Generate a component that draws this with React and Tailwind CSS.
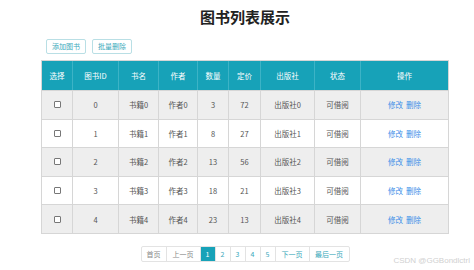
import React from "react";

const BOOKS = [0, 1, 2, 3, 4].map((i) => ({
  id: i,
  name: "书籍" + i,
  author: "作者" + i,
  count: [3, 8, 13, 18, 23][i],
  price: [72, 27, 56, 21, 13][i],
  press: "出版社" + i,
  status: "可借阅",
}));

const COLS = ["w-[31px]", "w-[46px]", "w-[40px]", "w-[39px]", "w-[31px]", "w-[32px]", "w-[54px]", "w-[46px]", "flex-1"];
const HEADS = ["选择", "图书ID", "书名", "作者", "数量", "定价", "出版社", "状态", "操作"];

const PAGES = [
  { label: "首页", w: "w-[25px]", muted: true },
  { label: "上一页", w: "w-[34px]", muted: true },
  { label: "1", w: "w-[15px]", active: true },
  { label: "2", w: "w-[15px]" },
  { label: "3", w: "w-[15px]" },
  { label: "4", w: "w-[15px]" },
  { label: "5", w: "w-[15px]" },
  { label: "下一页", w: "w-[34px]" },
  { label: "最后一页", w: "w-[39px]" },
];

const App = () => {
  return (
    <div className="w-[474px] h-[270px] bg-white relative overflow-hidden" style={{ fontFamily: '"Noto Sans CJK SC", "Open Sans", sans-serif' }}>
      <div className="ml-[41px] w-[408px]">
        {/* title */}
        <h1 className="pt-[6px] h-[39px] text-center text-[15px] font-bold text-[#222] leading-[22px]">图书列表展示</h1>

        {/* toolbar */}
        <div className="flex gap-[6px] pl-[5px] h-[21px] items-start">
          <button className="w-[40px] h-[15px] border border-[#b9dfe5] rounded-[2px] text-[7px] text-[#3aa9bb] leading-none">添加图书</button>
          <button className="w-[40px] h-[15px] border border-[#b9dfe5] rounded-[2px] text-[7px] text-[#3aa9bb] leading-none">批量删除</button>
        </div>

        {/* table */}
        <div className="border border-[#d6d6d6]">
          <div className="flex h-[29px] bg-[#17a2b8] text-white text-[7.5px]">
            {HEADS.map((h, i) => (
              <div key={h} className={`${COLS[i]} flex items-center justify-center border-r border-[#3db3c6] last:border-r-0`}>{h}</div>
            ))}
          </div>
          {BOOKS.map((b, r) => (
            <div key={b.id} className={`flex h-[28.6px] text-[7.5px] text-[#555] border-t border-[#d6d6d6] ${r % 2 === 0 ? "bg-[#eeeeee]" : "bg-white"}`}>
              <div className={`${COLS[0]} flex items-center justify-center border-r border-[#d6d6d6]`}>
                <span className="w-[7px] h-[7px] border border-[#777] rounded-[1px] bg-white" />
              </div>
              {[b.id, b.name, b.author, b.count, b.price, b.press, b.status].map((v, i) => (
                <div key={i} className={`${COLS[i + 1]} flex items-center justify-center border-r border-[#d6d6d6]`}>{v}</div>
              ))}
              <div className={`${COLS[8]} flex items-center justify-center gap-[3px] text-[#3b8ee8]`}>
                <span>修改</span>
                <span>删除</span>
              </div>
            </div>
          ))}
        </div>

        {/* pagination */}
        <div className="flex justify-center mt-[12px]">
          <div className="flex h-[16px] border border-[#e3e3e3] rounded-[2px] text-[7px]">
            {PAGES.map((p) => (
              <div
                key={p.label}
                className={`${p.w} flex items-center justify-center border-r border-[#e3e3e3] last:border-r-0 ${
                  p.active ? "bg-[#17a2b8] text-white" : p.muted ? "text-[#888]" : "text-[#3aa9bb]"
                }`}
              >
                {p.label}
              </div>
            ))}
          </div>
        </div>
      </div>

      {/* watermark */}
      <div className="absolute right-[4px] bottom-[3px] text-[8px] text-[#d0d0d0]" style={{ fontFamily: '"Liberation Sans", sans-serif' }}>CSDN @GGBondlctrl</div>
    </div>
  );
};

export default App;
